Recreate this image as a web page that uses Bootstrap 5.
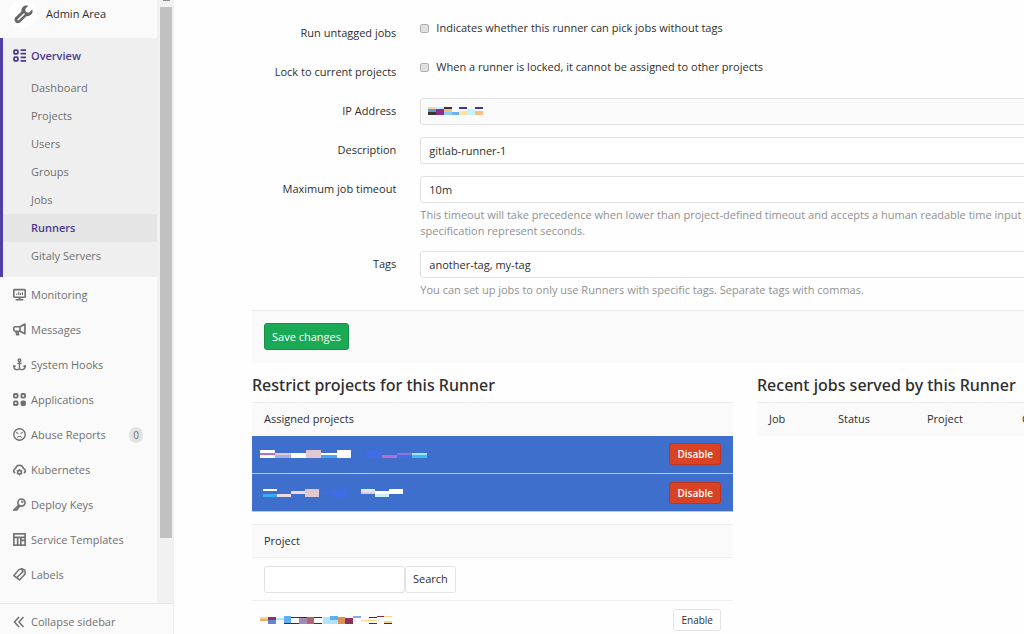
<!DOCTYPE html>
<html lang="en">
<head>
<meta charset="utf-8">
<meta name="viewport" content="width=device-width, initial-scale=1">
<title>Runner · Admin Area</title>
<link href="https://cdn.jsdelivr.net/npm/bootstrap@5.3.0/dist/css/bootstrap.min.css" rel="stylesheet">
<style>
  body { font-family: "Open Sans", "Noto Sans", sans-serif; font-size: 11px; line-height: 16px; color: #2e2e2e; background: #fefefe; }
  .sidebar { width: 174px; background: #fafafa; border-right: 1px solid #efefef; color: #707070; }
  .sidebar a { color: inherit; text-decoration: none; }
  .sidebar .side-head { height: 38px; padding: 0 0 10px 9px; gap: 9px; color: #2e2e2e; }
  .side-head .disc { width: 28px; height: 28px; background: #fff; color: #666; }
  .side-group { background: #efefef; border-left: 3px solid #4f3fa5; padding-bottom: 7px; }
  .side-group ul { padding-top: 1px; }
  .sidebar .side-group .side-link { padding-left: 10px; color: #4b3a8f; font-weight: 600; }
  .side-group li a { display: flex; align-items: center; height: 28px; padding-left: 28px; }
  .sidebar .side-group li a.current { background: #e5e5e5; color: #4b3a8f; font-weight: 600; }
  .side-link { display: flex; align-items: center; gap: 5px; height: 35px; padding-left: 13px; }
  .side-link svg { width: 13px; height: 13px; flex: none; }
  .side-link .peek { width: 14px; height: 14px; }
  .count { margin-left: auto; margin-right: 14px; padding: 0 4px; border-radius: 8px; background: #e3e3e3; font-size: 10px; }
  .track { width: 16px; padding: 0 1px 0 3px; background: #f1f1f1; }
  .thumb { height: 88%; background: #c1c1c1; }
  .side-foot { height: 31px; padding: 5px 0 0 13px; gap: 6px; border: 0; border-top: 1px solid #e5e5e5; background: #fafafa; color: #707070; }
  .content-area { width: 116%; margin-left: 78px; padding-top: 20px; }
  .field-row { margin-bottom: 12px; min-height: 27px; }
  .field-label { padding-top: 5px; text-align: right; }
  .field { height: 27px; padding: 2px 8px; font-size: 11px; line-height: 16px; border-color: #e1e1e1; border-radius: 3px; color: #2e2e2e; background: #fff; }
  .field:disabled { background: #fafafa; }
  .tick { appearance: none; width: 9px; height: 9px; margin-right: 7px; border: 1px solid #b0b0b0; border-radius: 2px; background: #e0e0e0; }
  .hint { margin-top: 4px; color: #919191; }
  .actions { height: 53px; padding: 12px; background: #fafafa; border-top: 1px solid #ececec; }
  .action-btn { height: 27px; padding: 0 7px; font-size: 11px; line-height: 16px; border-radius: 3px; }
  .btn-save { background: #1aaa55; border-color: #168f48; color: #fff; }
  .btn-plain { background: #fff; border-color: #e3e3e3; color: #2e2e2e; }
  .btn-row { height: 22px; font-size: 10px; }
  .btn-off { background: #d84325; border-color: #c0341d; color: #fff; font-weight: 600; }
  .section-title { font-family: "Noto Sans", sans-serif; font-size: 16px; line-height: 20px; font-weight: 500; margin: 12px 0 7px; }
  .grid-table { margin: 0 0 12px; --bs-table-bg: transparent; color: inherit; }
  .grid-table > :not(caption) > * > * { padding: 0 12px; border-bottom: 1px solid #eee; }
  .grid-table > thead > tr > th { height: 33px; vertical-align: middle; font-weight: 400; background: #fafafa; border-top: 1px solid #ececec; border-bottom: 0; }
  .grid-table > tbody > tr.picked > td { height: 38px; padding-left: 8px; background: #3f6fcd; border-bottom-color: #b5caef; }
  .grid-table > tbody > tr.search-row > td { height: 43px; border-top: 1px solid #eee; }
  .grid-table > tbody > tr.free-row > td { height: 39px; padding-left: 8px; }
  .search-box { width: 141px; }
  .ip-mask { position: absolute; left: 8px; top: 9px; }
  .w-job { width: 69px; } .w-status { width: 89px; } .w-project { width: 95px; }
</style>
</head>
<body class="vh-100 overflow-hidden d-flex">
<aside class="sidebar d-flex flex-column flex-shrink-0">
  <div class="d-flex flex-grow-1 overflow-hidden">
    <nav class="flex-grow-1 overflow-hidden" aria-label="Admin">
      <a href="#" class="side-head d-flex align-items-center">
        <span class="disc rounded-circle d-flex align-items-center justify-content-center">
          <svg width="19" height="19" viewBox="0 0 18.500 18.500"><path fill="currentColor" d="M17.700 4.300L14.500 7.500 11.500 6.900 10.900 3.900 14 .8C10.500-.5 6.800 2 7.300 6.300L1 12.300C-1 15 2.500 19.500 5.800 17L12 10.900C16 11.300 19.200 8 17.700 4.300z"/><path d="M4 14.400L9.800 8.700" stroke="#fff" stroke-width="1.500" stroke-linecap="round"/></svg>
        </span>
        <span>Admin Area</span>
      </a>
      <div class="side-group">
        <a href="#" class="side-link"><svg viewBox="0 0 12 12" fill="none" stroke="currentColor" stroke-width="1.700"><rect x="1" y="1" width="3.500" height="3.500" rx="1"/><rect x="1" y="7.500" width="3.500" height="3.500" rx="1"/><path d="M7 1h5M7 4.300h5M7 7.700h5M7 11h5"/></svg>Overview</a>
        <ul class="list-unstyled m-0">
          <li><a href="#">Dashboard</a></li>
          <li><a href="#">Projects</a></li>
          <li><a href="#">Users</a></li>
          <li><a href="#">Groups</a></li>
          <li><a href="#">Jobs</a></li>
          <li><a href="#" class="current" aria-current="page">Runners</a></li>
          <li><a href="#">Gitaly Servers</a></li>
        </ul>
      </div>
      <a href="#" class="side-link"><svg viewBox="0 0 12 12" fill="none" stroke="currentColor" stroke-width="1.500"><rect x=".7" y="1.500" width="10.600" height="7" rx="1"/><path d="M3.500 6.500V5M5.300 6.500V3.500M7 6.500V4.500M8.700 6.500V4" stroke-width="1"/><path d="M2.500 10.800h7M6 8.500v2"/></svg>Monitoring</a>
      <a href="#" class="side-link"><svg viewBox="0 0 12 12" fill="none" stroke="currentColor" stroke-width="1.500" stroke-linejoin="round"><path d="M11 1v9L6.500 7.600H2Q.7 7.600.7 5.500T2 3.500h4.500L11 1zM6.500 3.500v4M2.700 7.800l.8 3h1.700l-.6-3"/></svg>Messages</a>
      <a href="#" class="side-link"><svg viewBox="0 0 12 12" fill="none" stroke="currentColor" stroke-width="1.300"><circle cx="6" cy="2" r="1.200"/><path d="M6 3.200V10M4 5h4M.9 6.500V8C.9 11.600 6 11.300 6 9.200c0 2.100 5.100 2.400 5.100-1.200V6.500M0 7.600h2.500M9.500 7.600H12"/></svg>System Hooks</a>
      <a href="#" class="side-link"><svg viewBox="0 0 12 12" fill="none" stroke="currentColor" stroke-width="1.700"><rect x=".9" y=".9" width="3.300" height="3.300" rx=".8"/><rect x="7.800" y=".9" width="3.300" height="3.300" rx=".8"/><rect x=".9" y="7.800" width="3.300" height="3.300" rx=".8"/><rect x="7.800" y="7.800" width="3.300" height="3.300" rx=".8" fill="currentColor"/></svg>Applications</a>
      <a href="#" class="side-link"><svg viewBox="0 0 12 12" fill="none" stroke="currentColor" stroke-width="1.300"><circle cx="6" cy="6" r="5.300"/><path d="M3 4l2 1.200M9 4L7 5.200M4 8.800c.8-1.500 3.200-1.500 4 0" stroke-width="1"/></svg>Abuse Reports<span class="count">0</span></a>
      <a href="#" class="side-link"><svg viewBox="0 0 12 12" fill="none" stroke="currentColor" stroke-width="1.400"><path d="M2 9.200C-.2 8.200.5 5.300 2.500 5 3 1 9 1 9.500 5c2 .3 2.700 3.200.5 4.200"/><circle cx="6" cy="8.500" r="1.700"/><path d="M6 5.500v1M6 10.500v1M3.400 7l.9.500M7.700 9.500l.9.500M8.600 7l-.9.500M4.300 9.500l-.9.500" stroke-width="1"/></svg>Kubernetes</a>
      <a href="#" class="side-link"><svg viewBox="0 0 12 12" fill="none" stroke="currentColor" stroke-width="1.500"><circle cx="7.800" cy="4.200" r="3.300"/><path d="M5.500 6.500L1 11h2.500l2.700-3.500"/><circle cx="8.600" cy="3.400" r=".4"/></svg>Deploy Keys</a>
      <a href="#" class="side-link"><svg viewBox="0 0 12 12" fill="none" stroke="currentColor" stroke-width="1.500"><rect x=".8" y=".8" width="10.400" height="10.400"/><path d="M.8 4h10.400M4.300 4v7M7.200 6.800h4M7.200 4v7"/></svg>Service Templates</a>
      <a href="#" class="side-link"><svg viewBox="0 0 12 12" fill="none" stroke="currentColor" stroke-width="1.400" stroke-linejoin="round"><path d="M5.500 1.500L8 .7l3 1.300.2 3.500L6 11 .8 7z"/><path d="M3.500 9L9 3.500M8 .8L9.500 4"/></svg>Labels</a>
      <a href="#" class="side-link" aria-label="Appearance"><svg class="peek" viewBox="0 0 12 12" fill="none" stroke="currentColor" stroke-width="1.400"><circle cx="6" cy="6" r="5.300"/></svg></a>
    </nav>
    <div class="track" aria-hidden="true"><svg class="d-block" width="12" height="7"><path d="M3 0h7v1H3z" fill="#8a8a8a"/></svg><div class="thumb"></div></div>
  </div>
  <button type="button" class="side-foot d-flex align-items-center flex-shrink-0"><svg width="12" height="12" viewBox="0 0 12 12" fill="none" stroke="currentColor" stroke-width="1.500"><path d="M6 1L1.500 6 6 11M10.500 1L6 6l4.500 5"/></svg>Collapse sidebar</button>
</aside>

<main class="flex-grow-1 overflow-hidden">
  <div class="content-area">
    <form>
      <div class="row field-row">
        <label class="col-2 field-label" for="untagged">Run untagged jobs</label>
        <div class="col-10"><div class="d-flex align-items-center"><input class="tick" type="checkbox" id="untagged"><label for="untagged">Indicates whether this runner can pick jobs without tags</label></div></div>
      </div>
      <div class="row field-row">
        <label class="col-2 field-label" for="locked">Lock to current projects</label>
        <div class="col-10"><div class="d-flex align-items-center"><input class="tick" type="checkbox" id="locked"><label for="locked">When a runner is locked, it cannot be assigned to other projects</label></div></div>
      </div>
      <div class="row field-row">
        <label class="col-2 field-label" for="ip">IP Address</label>
        <div class="col-10"><div class="position-relative"><input class="form-control field" id="ip" type="text" disabled>
          <svg class="ip-mask" width="55" height="8" viewBox="0 0 165 24" shape-rendering="crispEdges"><path fill="#f8d7a5" d="M0 0h24v6H0z"/><path fill="#5b9bd0" d="M0 6h24v9H0z"/><path fill="#363636" d="M0 15h24v9H0zM48 0h24v6H48z"/><path fill="#8b2f8b" d="M24 6h24v18H24z"/><path fill="#c5f2fc" d="M24 0h24v6H24zM117 6h24v18h-24z"/><path fill="#f7c07f" d="M48 6h24v9H48zM141 12h24v12h-24z"/><path fill="#8ecbfb" d="M48 15h24v9H48z"/><path fill="#6bb1ec" d="M72 15h21v9H72z"/><path fill="#443596" d="M93 0h24v6H93zM141 0h24v6h-24z"/><path fill="#ffe0a5" d="M93 12h24v12H93z"/></svg>
        </div></div>
      </div>
      <div class="row field-row">
        <label class="col-2 field-label" for="desc">Description</label>
        <div class="col-10"><input class="form-control field" id="desc" type="text" value="gitlab-runner-1"></div>
      </div>
      <div class="row field-row">
        <label class="col-2 field-label" for="timeout">Maximum job timeout</label>
        <div class="col-10"><input class="form-control field" id="timeout" type="text" value="10m"><div class="hint">This timeout will take precedence when lower than project-defined timeout and accepts a human readable time input language like "1 hour". Values without specification represent seconds.</div></div>
      </div>
      <div class="row field-row">
        <label class="col-2 field-label" for="tags">Tags</label>
        <div class="col-10"><input class="form-control field" id="tags" type="text" value="another-tag, my-tag"><div class="hint">You can set up jobs to only use Runners with specific tags. Separate tags with commas.</div></div>
      </div>
      <div class="actions"><button type="submit" class="btn action-btn btn-save">Save changes</button></div>
    </form>

    <div class="row">
      <section class="col-6">
        <h4 class="section-title">Restrict projects for this Runner</h4>
        <table class="table grid-table align-middle">
          <thead><tr><th colspan="2">Assigned projects</th></tr></thead>
          <tbody>
            <tr class="picked">
              <td><svg class="d-block" width="168" height="8" viewBox="0 0 504 24" shape-rendering="crispEdges" aria-label="Project"><path fill="#fff" d="M0 0h46v9H0zM0 15h46v9H0zM93 9h45v15H93zM182 9h48v6h-48zM231 0h43v24h-43z"/><path fill="#b66cd0" d="M0 9h46v6H0zM366 15h45v9h-45z"/><path fill="#e1c8d0" d="M46 9h47v6H46zM138 0h44v24h-44z"/><path fill="#9eb3ee" d="M46 15h47v9H46z"/><path fill="#3fa9f5" d="M182 15h48v9h-48z"/><path fill="#3d6ee5" d="M318 0h48v24h-48zM411 15h45v9h-45z"/><path fill="#9270e0" d="M411 9h45v6h-45z"/><path fill="#a7e3f7" d="M456 9h46v6h-46z"/><path fill="#35c0f4" d="M456 15h46v9h-46z"/></svg></td>
              <td class="text-end"><button type="button" class="btn action-btn btn-row btn-off">Disable</button></td>
            </tr>
            <tr class="picked">
              <td><svg class="d-block" width="146" height="9" viewBox="-9 0 438 27" shape-rendering="crispEdges" aria-label="Project"><path fill="#fff" d="M0 3h42v6H0zM336 9h42v9h-42zM378 3h42v15h-42z"/><path fill="#3fa9f5" d="M0 19h42v8H0z"/><path fill="#f0d9e3" d="M42 19h42v8H42zM84 10h42v9H84z"/><path fill="#e1c8d0" d="M126 2h41v25h-41zM294 12h42v6h-42z"/><path fill="#3d6ee5" d="M167 11h42v7h-42zM209 2h43v25h-43z"/><path fill="#cfeffa" d="M294 3h42v8h-42zM336 19h42v8h-42z"/></svg></td>
              <td class="text-end"><button type="button" class="btn action-btn btn-row btn-off">Disable</button></td>
            </tr>
          </tbody>
        </table>
        <table class="table grid-table align-middle">
          <thead><tr><th colspan="2">Project</th></tr></thead>
          <tbody>
            <tr class="search-row"><td colspan="2"><div class="d-flex"><input class="form-control field search-box" type="search" aria-label="Search projects"><button type="button" class="btn action-btn btn-plain">Search</button></div></td></tr>
            <tr class="free-row">
              <td><svg class="d-block" width="133" height="8" viewBox="0 0 399 24" shape-rendering="crispEdges" aria-label="Project"><path fill="#fbd28e" d="M0 3h24v6H0zM304 12h48v3h-48zM372 0h24v3h-24zM372 15h24v6h-24z"/><path fill="#efaa64" d="M0 9h24v6H0z"/><path fill="#8c315c" d="M24 3h24v9H24zM255 6h24v18h-24z"/><path fill="#6286d2" d="M24 12h24v12H24z"/><path fill="#aee4fd" d="M48 6h24v6H48zM188 3h46v21h-46z"/><path fill="#60aef0" d="M72 0h21v21H72zM210 0h24v12h-24z"/><path fill="#333" d="M72 21h45v3H72zM93 3h48v3H93zM163 3h24v3h-24zM163 21h24v3h-24zM327 3h24v3h-24zM327 21h24v3h-24zM372 21h24v3h-24z"/><path fill="#a58ab5" d="M117 6h24v18h-24z"/><path fill="#b26477" d="M140 3h23v21h-23z"/><path fill="#de9154" d="M233 3h22v21h-22z"/><path fill="#8da8ef" d="M279 0h24v6h-24z"/><path fill="#842d3c" d="M351 0h21v3h-21z"/></svg></td>
              <td class="text-end"><button type="button" class="btn action-btn btn-row btn-plain">Enable</button></td>
            </tr>
          </tbody>
        </table>
      </section>
      <section class="col-6">
        <h4 class="section-title">Recent jobs served by this Runner</h4>
        <table class="table grid-table align-middle">
          <thead><tr><th class="w-job">Job</th><th class="w-status">Status</th><th class="w-project">Project</th><th>Commit</th></tr></thead>
        </table>
      </section>
    </div>
  </div>
</main>
<script src="https://cdn.jsdelivr.net/npm/bootstrap@5.3.0/dist/js/bootstrap.bundle.min.js"></script>
</body>
</html>
